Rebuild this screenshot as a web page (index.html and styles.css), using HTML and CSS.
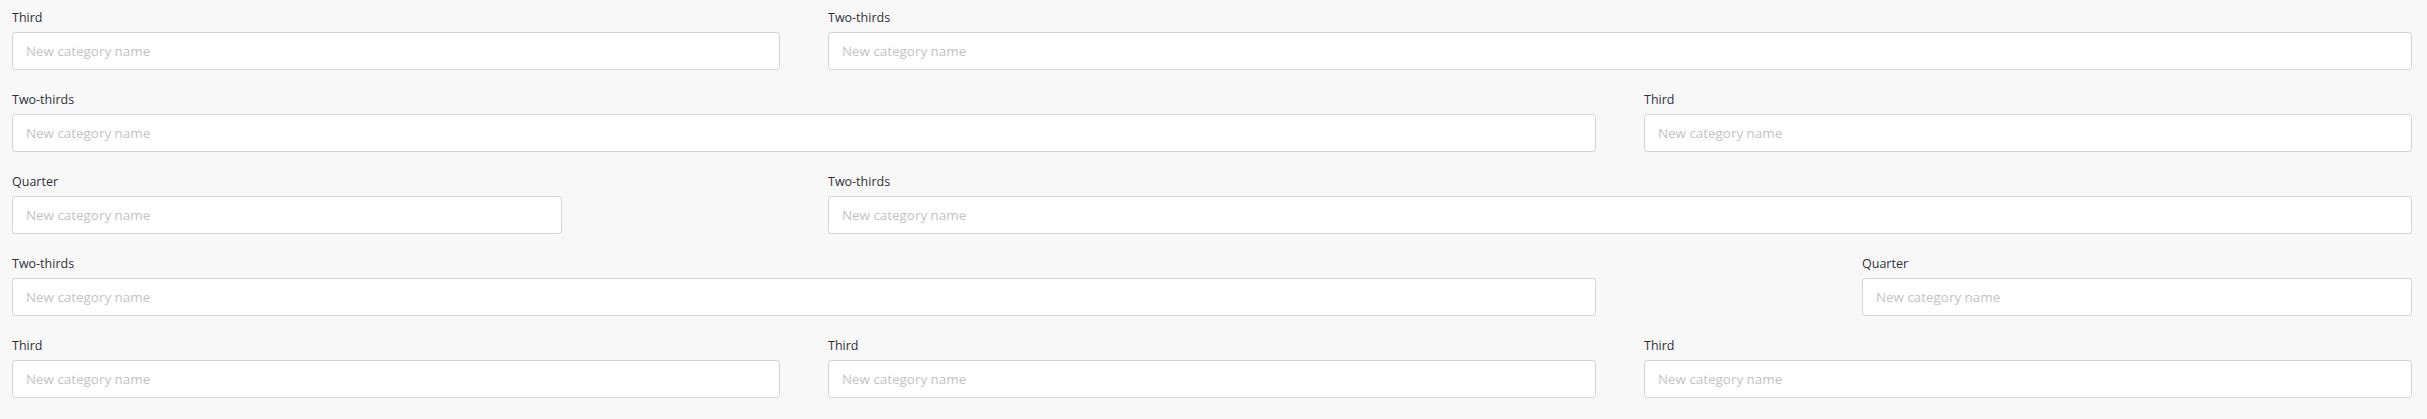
FILE: index.html
```html
<!DOCTYPE html>
<html lang="en">
<head>
<meta charset="utf-8">
<title>Category layout</title>
<link rel="stylesheet" href="styles.css">
</head>
<body>
<div class="page">
  <div class="row">
    <div class="field third"><label class="label">Third</label><input class="input" type="text" placeholder="New category name"></div>
    <div class="field two-thirds"><label class="label">Two-thirds</label><input class="input" type="text" placeholder="New category name"></div>
  </div>
  <div class="row">
    <div class="field two-thirds"><label class="label">Two-thirds</label><input class="input" type="text" placeholder="New category name"></div>
    <div class="field third"><label class="label">Third</label><input class="input" type="text" placeholder="New category name"></div>
  </div>
  <div class="row">
    <div class="field quarter"><label class="label">Quarter</label><input class="input" type="text" placeholder="New category name"></div>
    <div class="field two-thirds"><label class="label">Two-thirds</label><input class="input" type="text" placeholder="New category name"></div>
  </div>
  <div class="row">
    <div class="field two-thirds"><label class="label">Two-thirds</label><input class="input" type="text" placeholder="New category name"></div>
    <div class="field quarter"><label class="label">Quarter</label><input class="input" type="text" placeholder="New category name"></div>
  </div>
  <div class="row">
    <div class="field third"><label class="label">Third</label><input class="input" type="text" placeholder="New category name"></div>
    <div class="field third"><label class="label">Third</label><input class="input" type="text" placeholder="New category name"></div>
    <div class="field third"><label class="label">Third</label><input class="input" type="text" placeholder="New category name"></div>
  </div>
</div>
</body>
</html>
```
FILE: styles.css
```css
html, body {
  margin: 0;
  padding: 0;
  background: #f8f8f8;
}
body {
  font-family: "Open Sans", "Noto Sans", sans-serif;
  font-size: 13px;
  color: #2f3038;
}
.page {
  width: 2400px;
  padding: 8px 0 0 12px;
  display: flex;
  flex-direction: column;
  gap: 20px;
}
.row {
  display: flex;
  justify-content: space-between;
}
.field {
  display: flex;
  flex-direction: column;
  gap: 4px;
}
.third { width: 768px; }
.two-thirds { width: 1584px; }
.quarter { width: 550px; }
.label {
  font-size: 12.5px;
  line-height: 20px;
  height: 20px;
  color: #2f3038;
}
.input {
  box-sizing: border-box;
  height: 38px;
  width: 100%;
  margin: 0;
  padding: 0 13px;
  border: 1px solid #d3d6d8;
  border-radius: 3px;
  background: #fff;
  font-family: "Open Sans", "Noto Sans", sans-serif;
  font-size: 13.4px;
  color: #333;
  outline: none;
}
.input::placeholder {
  color: #c3c3c3;
  opacity: 1;
}
```
